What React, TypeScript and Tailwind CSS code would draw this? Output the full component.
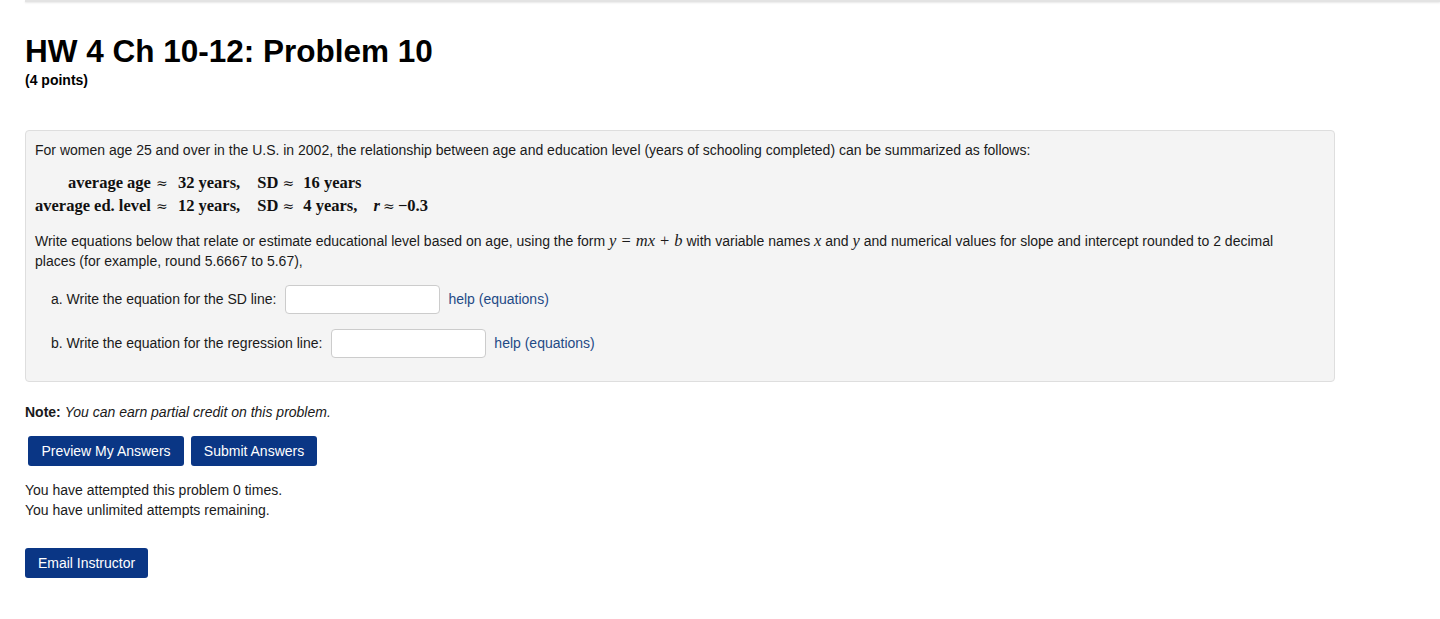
import React from "react";

const M = ({ children }: { children: React.ReactNode }) => (
  <span className="font-['Liberation_Serif',serif] text-[16.5px] italic leading-none">{children}</span>
);

const Op = ({ children }: { children: React.ReactNode }) => (
  <span className="mx-[5px] font-['Liberation_Serif',serif] text-[16.5px] leading-none">{children}</span>
);

const Approx = ({ cls = "ml-[5px] mr-[10px]" }: { cls?: string }) => (
  <span className={`${cls} inline-block w-[12px] text-center font-['DejaVu_Serif',serif] text-[14px] font-normal leading-none`}>≈</span>
);

export default function App() {
  return (
    <div className="min-h-[619px] bg-white font-['Liberation_Sans',Arial,sans-serif] text-[14px] text-[#1a1a1a]">
      <div className="ml-[25px] h-[2px] bg-[#e3e3e3] shadow-[0_1px_2px_rgba(0,0,0,0.10)]" />
      <div className="px-[25px]">
        <h1 className="mt-[31px] text-[31.5px] font-bold leading-[36px] text-black">HW 4 Ch 10-12: Problem 10</h1>
        <div className="mt-[2px] text-[14px] font-bold leading-[18px] text-black">(4 points)</div>

        <div className="mt-[41px] w-[1310px] rounded-[4px] border border-[#dedede] bg-[#f4f4f4] px-[9px] pb-[23px] pt-[9px]">
          <p className="leading-[20px]">
            For women age 25 and over in the U.S. in 2002, the relationship between age and education level (years of schooling completed) can be summarized as follows:
          </p>
          <div className="mt-[11px] grid w-max grid-cols-[auto_auto_auto_auto_auto] font-['Liberation_Serif',serif] text-[16.5px] font-bold leading-[23px] text-[#111]">
            <span className="text-right">average age</span>
            <span>
              <Approx />32 years,
            </span>
            <span className="pl-[17px]">SD</span>
            <span>
              <Approx cls="ml-[4px] mr-[9px]" />16 years
            </span>
            <span />
            <span className="text-right">average ed. level</span>
            <span>
              <Approx />12 years,
            </span>
            <span className="pl-[17px]">SD</span>
            <span>
              <Approx cls="ml-[4px] mr-[9px]" />4 years,
            </span>
            <span className="pl-[12px]">
              <i>r</i>
              <Approx cls="mx-[3px]" />−0.3
            </span>
          </div>
          <p className="mt-[14px] max-w-[1262px] leading-[20px]">
            Write equations below that relate or estimate educational level based on age, using the form <M>y</M>
            <Op>=</Op>
            <M>mx</M>
            <Op>+</Op>
            <M>b</M> with variable names <M>x</M> and <M>y</M> and numerical values for slope and intercept rounded to 2
            decimal places (for example, round 5.6667 to 5.67),
          </p>
          <div className="mt-[14px] flex items-center pl-[16px]">
            <span>a. Write the equation for the SD line:</span>
            <input className="ml-[9px] h-[29px] w-[155px] rounded-[4px] border border-[#cccccc] bg-white" />
            <span className="ml-[8px] text-[#1f4a86]">help (equations)</span>
          </div>
          <div className="mt-[15px] flex items-center pl-[16px]">
            <span>b. Write the equation for the regression line:</span>
            <input className="ml-[9px] h-[29px] w-[155px] rounded-[4px] border border-[#cccccc] bg-white" />
            <span className="ml-[8px] text-[#1f4a86]">help (equations)</span>
          </div>
        </div>

        <p className="mt-[20px] leading-[20px]">
          <b>Note:</b> <i>You can earn partial credit on this problem.</i>
        </p>
        <div className="mt-[14px] flex gap-[7px] pl-[3px]">
          <button className="h-[30px] w-[156px] rounded-[3px] bg-[#0a3685] text-[14px] text-white">Preview My Answers</button>
          <button className="h-[30px] w-[126px] rounded-[3px] bg-[#0a3685] text-[14px] text-white">Submit Answers</button>
        </div>
        <p className="mt-[14px] leading-[20px]">You have attempted this problem 0 times.</p>
        <p className="leading-[20px]">You have unlimited attempts remaining.</p>
        <button className="mt-[28px] h-[30px] w-[123px] rounded-[3px] bg-[#0a3685] text-[14px] text-white">Email Instructor</button>
      </div>
    </div>
  );
}
